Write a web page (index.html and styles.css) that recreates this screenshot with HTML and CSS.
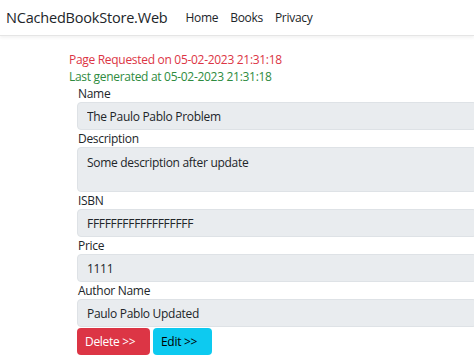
FILE: index.html
```html
<!DOCTYPE html>
<html lang="en">
<head>
  <meta charset="UTF-8">
  <title>NCachedBookStore.Web</title>
  <link rel="stylesheet" href="styles.css">
</head>
<body>

  <nav class="navbar">
    <a href="#" class="brand">NCachedBookStore.Web</a>
    <ul class="nav-links">
      <li><a href="#">Home</a></li>
      <li><a href="#">Books</a></li>
      <li><a href="#">Privacy</a></li>
    </ul>
  </nav>

  <div class="container">
    <p class="requested">Page Requested on 05-02-2023 21:31:18</p>
    <p class="generated">Last generated at 05-02-2023 21:31:18</p>

    <form class="book-form">
      <label for="name">Name</label>
      <input type="text" id="name" value="The Paulo Pablo Problem" readonly>

      <label for="description">Description</label>
      <textarea id="description" readonly>Some description after update</textarea>

      <label for="isbn">ISBN</label>
      <input type="text" id="isbn" value="FFFFFFFFFFFFFFFFFF" readonly>

      <label for="price">Price</label>
      <input type="text" id="price" value="1111" readonly>

      <label for="author">Author Name</label>
      <input type="text" id="author" value="Paulo Pablo Updated" readonly>

      <div class="actions">
        <a href="#" class="btn btn-delete">Delete &gt;&gt;</a>
        <a href="#" class="btn btn-edit">Edit &gt;&gt;</a>
      </div>
    </form>
  </div>

</body>
</html>
```

FILE: styles.css
```css
body {
  font-family: "Open Sans", "Noto Sans", sans-serif;
  font-size: 12px;
  letter-spacing: -0.3px;
  margin: 0;
  padding: 0;
  background-color: #fff;
  color: #212529;
  overflow: hidden;
}
.navbar {
  display: flex;
  align-items: center;
  height: 35px;
  padding: 0 6px;
  border-bottom: 1px solid #e5e5e5;
  box-shadow: 0 2px 3px rgba(0, 0, 0, 0.05);
}
.brand {
  font-size: 14.5px;
  letter-spacing: -0.2px;
  color: #212529;
  text-decoration: none;
  margin-right: 12px;
}
.nav-links {
  display: flex;
  list-style: none;
  margin: 0;
  padding: 0;
}
.nav-links a {
  display: block;
  padding: 0 6px;
  color: #212529;
  text-decoration: none;
  font-size: 12px;
}
.container {
  padding: 15px 0 0 69px;
}
.container p {
  margin: 0;
  line-height: 17px;
}
.requested {
  color: #dc3545;
}
.generated {
  color: #2e8b40;
}
.book-form {
  display: flex;
  flex-direction: column;
  align-items: flex-start;
  margin-left: 8px;
  width: 400px;
}
.book-form label {
  line-height: 17px;
  padding-left: 1px;
}
.book-form input,
.book-form textarea {
  box-sizing: border-box;
  width: 100%;
  height: 28px;
  padding: 0 9px;
  font-family: inherit;
  font-size: 12px;
  letter-spacing: -0.3px;
  color: #212529;
  background-color: #e9ecef;
  border: 1px solid #dee2e6;
  border-radius: 4px;
  outline: none;
}
.book-form textarea {
  height: 45px;
  padding-top: 6px;
  resize: none;
}
.actions {
  display: flex;
  gap: 3px;
  margin-top: 1px;
}
.btn {
  display: inline-block;
  height: 27px;
  line-height: 27px;
  padding: 0 8px;
  border-radius: 4px;
  text-decoration: none;
  font-size: 12px;
}
.btn-delete {
  width: 57px;
  background-color: #dc3545;
  color: #fff;
}
.btn-edit {
  width: 43px;
  background-color: #0dcaf0;
  color: #000;
}
```
